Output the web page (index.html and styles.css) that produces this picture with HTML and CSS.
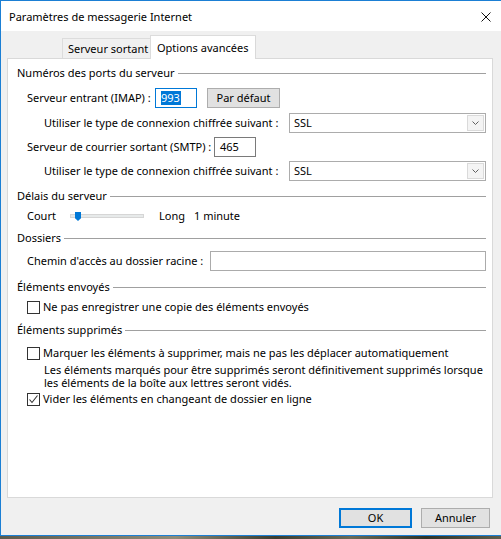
FILE: index.html
```html
<!DOCTYPE html>
<html lang="fr">
<head>
<meta charset="utf-8">
<title>Paramètres de messagerie Internet</title>
<link rel="stylesheet" href="styles.css">
</head>
<body>
<div class="window">
  <div class="titlebar">
    <span class="title">Paramètres de messagerie Internet</span>
    <svg class="close" width="10" height="10" viewBox="0 0 10 10"><path d="M0.5 0.5 L9.5 9.5 M9.5 0.5 L0.5 9.5" stroke="#111" stroke-width="1" fill="none"/></svg>
  </div>
  <div class="tabs">
    <div class="tab">Serveur sortant</div>
    <div class="tab active">Options avancées</div>
  </div>
  <div class="panel">
    <div class="group-title h1">Numéros des ports du serveur</div>
    <div class="row r-imap">
      <span class="lbl w-imap">Serveur entrant (IMAP) :</span>
      <div class="textbox port focused"><span class="sel">993</span></div>
      <div class="btn btn-default">Par défaut</div>
    </div>
    <div class="row sub r-util1">
      <span class="lbl">Utiliser le type de connexion chiffrée suivant :</span>
      <div class="combo"><span class="combo-val">SSL</span><span class="combo-btn"><svg width="7" height="4" viewBox="0 0 7 4"><path d="M0.5 0.5 L3.5 3.5 L6.5 0.5" stroke="#606060" stroke-width="1" fill="none"/></svg></span></div>
    </div>
    <div class="row r-smtp">
      <span class="lbl w-smtp">Serveur de courrier sortant (SMTP) :</span>
      <div class="textbox port">465</div>
    </div>
    <div class="row sub r-util2">
      <span class="lbl">Utiliser le type de connexion chiffrée suivant :</span>
      <div class="combo"><span class="combo-val">SSL</span><span class="combo-btn"><svg width="7" height="4" viewBox="0 0 7 4"><path d="M0.5 0.5 L3.5 3.5 L6.5 0.5" stroke="#606060" stroke-width="1" fill="none"/></svg></span></div>
    </div>
    <div class="group-title h2">Délais du serveur</div>
    <div class="row r-slider">
      <span class="lbl w-court">Court</span>
      <div class="track"><span class="thumb"></span></div>
      <span class="lbl w-long">Long</span>
      <span class="lbl">1 minute</span>
    </div>
    <div class="group-title h3">Dossiers</div>
    <div class="row r-path">
      <span class="lbl w-path">Chemin d'accès au dossier racine :</span>
      <div class="textbox path"></div>
    </div>
    <div class="group-title h4">Éléments envoyés</div>
    <div class="row check r-cb1">
      <span class="box"></span>
      <span class="lbl">Ne pas enregistrer une copie des éléments envoyés</span>
    </div>
    <div class="group-title h5">Éléments supprimés</div>
    <div class="row check r-cb2">
      <span class="box"></span>
      <span class="lbl">Marquer les éléments à supprimer, mais ne pas les déplacer automatiquement</span>
    </div>
    <div class="note">
      <div class="note-line">Les éléments marqués pour être supprimés seront définitivement supprimés lorsque</div>
      <div class="note-line">les éléments de la boîte aux lettres seront vidés.</div>
    </div>
    <div class="row check r-cb3">
      <span class="box checked"><svg width="11" height="11" viewBox="0 0 11 11"><path d="M1.5 5.5 L4 8.5 L9.5 1.5" stroke="#333" stroke-width="1.1" fill="none"/></svg></span>
      <span class="lbl">Vider les éléments en changeant de dossier en ligne</span>
    </div>
  </div>
  <div class="actions">
    <div class="btn btn-ok">OK</div>
    <div class="btn btn-cancel">Annuler</div>
  </div>
</div>
<div class="desktop"></div>
</body>
</html>
```
FILE: styles.css
```css
html, body {
  margin: 0;
  padding: 0;
  background: #f0f0f0;
}
body {
  font-family: "Noto Sans", "Liberation Sans", sans-serif;
  font-size: 11px;
  color: #000;
  width: 501px;
  height: 539px;
  overflow: hidden;
}
.window {
  width: 501px;
  height: 536px;
  box-sizing: border-box;
  border-top: 1px solid #1b7fd4;
  border-left: 1px solid #1b7fd4;
  border-bottom: 1px solid #1b7fd4;
  background: #f0f0f0;
  display: flex;
  flex-direction: column;
}
.titlebar {
  height: 30px;
  flex: none;
  background: #fff;
  display: flex;
  align-items: center;
  padding-left: 8px;
  padding-right: 10px;
}
.title {
  font-size: 11px;
  line-height: 16px;
  padding-top: 1px;
}
.close {
  margin-left: auto;
  margin-top: 1px;
}
.tabs {
  height: 27px;
  flex: none;
  display: flex;
  align-items: flex-end;
  padding-left: 61px;
  position: relative;
  z-index: 1;
}
.tab {
  box-sizing: border-box;
  height: 20px;
  width: 88px;
  border: 1px solid #dcdcdc;
  border-bottom: none;
  border-right: none;
  padding-left: 5px;
  line-height: 18px;
  padding-top: 1px;
}
.tab.active {
  height: 24px;
  width: 106px;
  background: #fff;
  border-right: 1px solid #d9d9d9;
  margin-bottom: -1px;
  padding-left: 6px;
  padding-top: 3px;
  line-height: 18px;
}
.panel {
  margin-left: 6px;
  width: 486px;
  height: 440px;
  flex: none;
  box-sizing: border-box;
  border: 1px solid #d9d9d9;
  background: #fff;
  padding: 6px 6px 0 9px;
}
.group-title {
  display: flex;
  align-items: center;
  height: 16px;
  line-height: 16px;
}
.group-title::after {
  content: "";
  flex: 1;
  height: 1px;
  background: #a0a0a0;
  margin-left: 3px;
}
.row {
  display: flex;
  align-items: center;
  height: 20px;
  line-height: 16px;
  padding-left: 10px;
}
.row.sub {
  padding-left: 27px;
}
.lbl {
  white-space: nowrap;
  flex: none;
}
.w-imap { width: 128px; }
.w-smtp { width: 187px; }
.w-path { width: 183px; }
.w-court { width: 43px; }
.w-long { width: 35px; }

.r-imap { margin-top: 7px; }
.r-util1 { margin-top: 5px; }
.r-smtp { margin-top: 4px; }
.r-util2 { margin-top: 4px; }
.h2 { margin-top: 7px; }
.r-slider { margin-top: 4px; height: 16px; }
.h3 { margin-top: 6px; }
.r-path { margin-top: 5px; }
.h4 { margin-top: 8px; }
.r-cb1 { margin-top: 4px; height: 16px; }
.h5 { margin-top: 7px; }
.r-cb2 { margin-top: 7px; height: 16px; }
.r-cb3 { margin-top: 2px; height: 16px; }

.textbox {
  box-sizing: border-box;
  height: 20px;
  border: 1px solid #7a7a7a;
  background: #fff;
  padding-left: 5px;
  line-height: 18px;
  flex: none;
}
.textbox.port {
  width: 42px;
}
.textbox.focused {
  border-color: #0078d7;
}
.textbox.path {
  flex: 1;
  border-color: #ababab;
}
.sel {
  background: #0078d7;
  color: #fff;
  display: inline-block;
  line-height: 14px;
  padding: 0 1px 0 0;
}
.btn {
  box-sizing: border-box;
  height: 20px;
  border: 1px solid #adadad;
  background: #e1e1e1;
  display: flex;
  align-items: center;
  justify-content: center;
  line-height: 16px;
  flex: none;
}
.btn-default {
  width: 73px;
  margin-left: 10px;
}
.combo {
  margin-left: auto;
  box-sizing: border-box;
  width: 197px;
  height: 20px;
  border: 1px solid #acacac;
  background: #fff;
  display: flex;
  align-items: center;
  padding-left: 4px;
  padding-right: 1px;
  flex: none;
}
.combo-val {
  flex: 1;
}
.combo-btn {
  box-sizing: border-box;
  width: 17px;
  height: 16px;
  border: 1px solid #dadada;
  background: #f4f4f4;
  display: flex;
  align-items: center;
  justify-content: center;
}
.track {
  position: relative;
  box-sizing: border-box;
  width: 74px;
  height: 4px;
  background: #e7eaea;
  border: 1px solid #d6d6d6;
  margin-right: 15px;
  flex: none;
}
.thumb {
  position: absolute;
  left: 4px;
  top: -3px;
  width: 6px;
  height: 9px;
  background: #0078d7;
  clip-path: polygon(0 0, 100% 0, 100% 70%, 50% 100%, 0 70%);
}
.check .box {
  box-sizing: border-box;
  width: 13px;
  height: 13px;
  border: 1px solid #333;
  background: #fff;
  margin-right: 3px;
  flex: none;
  display: flex;
  align-items: center;
  justify-content: center;
}
.note {
  margin: 2px 0 0 27px;
}
.note-line {
  height: 13px;
  line-height: 13px;
  white-space: nowrap;
}
.actions {
  display: flex;
  justify-content: flex-end;
  gap: 9px;
  margin-top: 10px;
  padding-right: 11px;
}
.btn-ok {
  width: 73px;
  border: 2px solid #0078d7;
}
.btn-cancel {
  width: 69px;
}
.desktop {
  height: 3px;
  background: linear-gradient(90deg, #5d5b4c 0%, #7b7866 20%, #8f8c78 35%, #3b3d2f 55%, #6a6b57 70%, #2f3326 85%, #5d5e4c 100%);
}
```
